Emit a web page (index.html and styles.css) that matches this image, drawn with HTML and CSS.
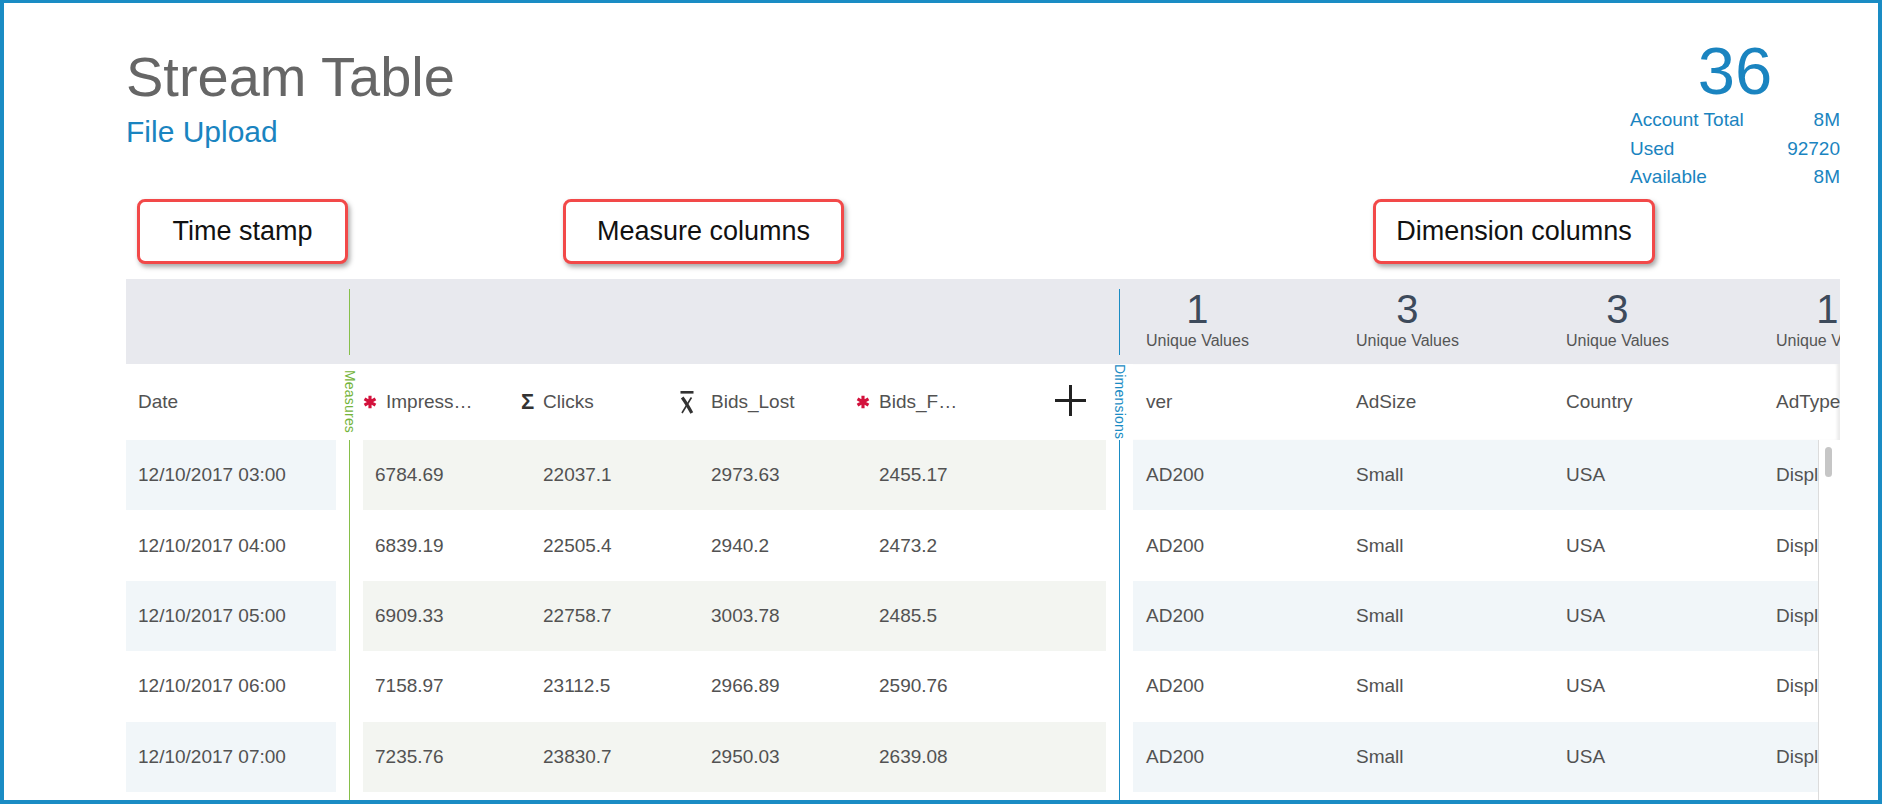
FILE: index.html
```html
<!DOCTYPE html>
<html lang="en">
<head>
<meta charset="utf-8">
<title>Stream Table</title>
<link rel="stylesheet" href="styles.css">
</head>
<body>
<div class="frame">
  <div class="top">
    <div class="titles">
      <h1 class="title">Stream Table</h1>
      <div class="subtitle">File Upload</div>
    </div>
    <div class="stats">
      <div class="big">36</div>
      <div class="stat"><span>Account Total</span><span>8M</span></div>
      <div class="stat"><span>Used</span><span>92720</span></div>
      <div class="stat"><span>Available</span><span>8M</span></div>
    </div>
  </div>

  <div class="callouts">
    <div class="callout c-time">Time stamp</div>
    <div class="callout c-meas">Measure columns</div>
    <div class="callout c-dim">Dimension columns</div>
  </div>

  <div class="table">
    <div class="date-col">
      <div class="band"></div>
      <div class="head"><span class="pad">Date</span></div>
      <div class="cell odd-d">12/10/2017 03:00</div>
      <div class="cell">12/10/2017 04:00</div>
      <div class="cell odd-d">12/10/2017 05:00</div>
      <div class="cell">12/10/2017 06:00</div>
      <div class="cell odd-d">12/10/2017 07:00</div>
    </div>

    <div class="sep sep-m">
      <div class="sep-band"><div class="line"></div></div>
      <div class="sep-head"><span class="vlabel">Measures</span></div>
      <div class="sep-body"><div class="line"></div></div>
    </div>

    <div class="measure-col">
      <div class="band"></div>
      <div class="head m-head">
        <div class="m-cell h-first"><span class="ico ico-first"><svg class="ast" viewBox="0 0 12 12" width="14" height="14"><path d="M6 0.6V11.4M1.3 3.3L10.7 8.7M1.3 8.7L10.7 3.3"/></svg></span>Impress…</div>
        <div class="m-cell"><span class="ico ico-sum">Σ</span>Clicks</div>
        <div class="m-cell"><span class="ico ico-avg"><svg viewBox="0 0 14 23" width="14" height="23"><rect x="0.5" y="0" width="13" height="2.6" fill="#333"/><path d="M2.2 6.5C5.2 10.5 8.5 16 11.8 22" stroke="#333" stroke-width="3.2" fill="none"/><path d="M11.5 6.5C8.6 11 5.4 16.5 2 22" stroke="#333" stroke-width="1.6" fill="none"/></svg></span>Bids_Lost</div>
        <div class="m-cell"><span class="ico ico-ast"><svg class="ast" viewBox="0 0 12 12" width="14" height="14"><path d="M6 0.6V11.4M1.3 3.3L10.7 8.7M1.3 8.7L10.7 3.3"/></svg></span>Bids_F…</div>
        <div class="m-plus"><svg viewBox="0 0 31 31" width="31" height="31"><path d="M15.5 0V31M0 15.5H31" stroke="#222" stroke-width="3"/></svg></div>
      </div>
      <div class="m-row odd-m"><div class="m-cell">6784.69</div><div class="m-cell">22037.1</div><div class="m-cell">2973.63</div><div class="m-cell">2455.17</div></div>
      <div class="m-row"><div class="m-cell">6839.19</div><div class="m-cell">22505.4</div><div class="m-cell">2940.2</div><div class="m-cell">2473.2</div></div>
      <div class="m-row odd-m"><div class="m-cell">6909.33</div><div class="m-cell">22758.7</div><div class="m-cell">3003.78</div><div class="m-cell">2485.5</div></div>
      <div class="m-row"><div class="m-cell">7158.97</div><div class="m-cell">23112.5</div><div class="m-cell">2966.89</div><div class="m-cell">2590.76</div></div>
      <div class="m-row odd-m"><div class="m-cell">7235.76</div><div class="m-cell">23830.7</div><div class="m-cell">2950.03</div><div class="m-cell">2639.08</div></div>
    </div>

    <div class="sep sep-d">
      <div class="sep-band"><div class="line"></div></div>
      <div class="sep-head"><span class="vlabel">Dimensions</span></div>
      <div class="sep-body"><div class="line"></div></div>
    </div>

    <div class="dim-col">
      <div class="band d-band">
        <div class="d-cell"><div class="uv"><span class="uv-n">1</span><span class="uv-l">Unique Values</span></div></div>
        <div class="d-cell"><div class="uv"><span class="uv-n">3</span><span class="uv-l">Unique Values</span></div></div>
        <div class="d-cell"><div class="uv"><span class="uv-n">3</span><span class="uv-l">Unique Values</span></div></div>
        <div class="d-cell"><div class="uv"><span class="uv-n">1</span><span class="uv-l">Unique Values</span></div></div>
      </div>
      <div class="head d-head">
        <div class="d-cell">ver</div>
        <div class="d-cell">AdSize</div>
        <div class="d-cell">Country</div>
        <div class="d-cell">AdType</div>
      </div>
      <div class="d-body">
        <div class="d-rows">
          <div class="d-row odd-d"><div class="d-cell">AD200</div><div class="d-cell">Small</div><div class="d-cell">USA</div><div class="d-cell">Display</div></div>
          <div class="d-row"><div class="d-cell">AD200</div><div class="d-cell">Small</div><div class="d-cell">USA</div><div class="d-cell">Display</div></div>
          <div class="d-row odd-d"><div class="d-cell">AD200</div><div class="d-cell">Small</div><div class="d-cell">USA</div><div class="d-cell">Display</div></div>
          <div class="d-row"><div class="d-cell">AD200</div><div class="d-cell">Small</div><div class="d-cell">USA</div><div class="d-cell">Display</div></div>
          <div class="d-row odd-d"><div class="d-cell">AD200</div><div class="d-cell">Small</div><div class="d-cell">USA</div><div class="d-cell">Display</div></div>
        </div>
        <div class="scroll"><div class="thumb"></div></div>
      </div>
    </div>
  </div>
</div>
</body>
</html>
```

FILE: styles.css
```css
* { box-sizing: border-box; margin: 0; padding: 0; }
html, body { width: 1882px; height: 804px; overflow: hidden; background: #fff; }
body { font-family: "Liberation Sans", Arial, sans-serif; color: #525252; }

.frame {
  width: 1882px;
  height: 804px;
  border: solid #1a8cc4;
  border-width: 3px 4px 4px 4px;
  padding: 33px 38px 0 122px;
  display: flex;
  flex-direction: column;
  overflow: hidden;
}

/* header */
.top { display: flex; justify-content: space-between; align-items: flex-start; }
.titles { margin-top: 11px; }
.title { font-size: 56px; line-height: 60px; font-weight: normal; color: #666; }
.subtitle { font-size: 30px; line-height: 34px; margin-top: 8px; color: #1a84c0; }
.stats { width: 210px; color: #1a84c0; }
.big { font-size: 67px; line-height: 70px; text-align: center; }
.stat { display: flex; justify-content: space-between; font-size: 19px; line-height: 28.5px; }

/* callouts */
.callouts { display: flex; margin-top: 7.5px; height: 65px; flex-shrink: 0; }
.callout {
  height: 65px;
  border: 3px solid #f24949;
  border-radius: 8px;
  box-shadow: 2px 3px 5px rgba(0, 0, 0, 0.35);
  background: #fff;
  display: flex;
  align-items: center;
  justify-content: center;
  font-size: 27px;
  color: #111;
}
.c-time { margin-left: 11px; width: 211px; }
.c-meas { margin-left: 215px; width: 281px; }
.c-dim { margin-left: 529px; width: 282px; }

/* table */
.table { display: flex; margin-top: 15px; flex: 1; min-height: 0; font-size: 19px; }
.band { height: 85px; background: #e8e9ee; flex-shrink: 0; }
.head { height: 76px; display: flex; align-items: center; flex-shrink: 0; }

.date-col { width: 210px; display: flex; flex-direction: column; }
.head .pad { padding-left: 12px; }
.cell { height: 70.4px; display: flex; align-items: center; padding-left: 12px; flex-shrink: 0; }
.odd-d { background: #f1f6f9; }
.odd-m { background: #f3f5f1; }

.sep { width: 27px; display: flex; flex-direction: column; align-items: center; }
.sep-band { height: 85px; align-self: stretch; background: #e8e9ee; display: flex; justify-content: center; padding-top: 10px; }
.sep-band .line { height: 66px; }
.sep-head { height: 76px; display: flex; align-items: center; justify-content: center; }
.sep-body { flex: 1; display: flex; }
.line { width: 1px; }
.vlabel { writing-mode: vertical-rl; font-size: 14px; line-height: 14px; letter-spacing: 0.2px; }
.sep-m .line { background: #86bf4a; }
.sep-m .vlabel { color: #74b43a; }
.sep-d .line { background: #1a8cc4; }
.sep-d .vlabel { color: #1a8cc4; }

.measure-col { width: 743px; display: flex; flex-direction: column; }
.m-row { height: 70.4px; display: flex; align-items: center; flex-shrink: 0; }
.m-cell { width: 168px; padding-left: 12px; display: flex; align-items: center; flex-shrink: 0; }
.m-head .m-cell.h-first { padding-left: 0; }
.ico { display: inline-flex; align-items: center; flex-shrink: 0; }
.ico-first { width: 23px; }
.ico-sum { width: 24px; margin-left: -24px; padding-left: 2px; font-weight: bold; font-size: 22px; color: #333; }
.ico-avg { width: 32px; margin-left: -32px; padding-left: 1px; }
.ico-ast { width: 24px; margin-left: -24px; padding-left: 1px; }
.ast { stroke: #d3123c; stroke-width: 2.7; fill: none; }
.m-plus { width: 71px; display: flex; justify-content: center; align-items: center; margin-top: -3px; }

.dim-col { flex: 1; min-width: 0; display: flex; flex-direction: column; overflow: hidden; }
.d-band { display: flex; padding-top: 10px; }
.d-cell { width: 210px; padding-left: 13px; flex-shrink: 0; white-space: nowrap; }
.uv { display: inline-flex; flex-direction: column; align-items: center; }
.uv-n { font-size: 40px; line-height: 40px; color: #3d4a5b; }
.uv-l { font-size: 16px; line-height: 18px; margin-top: 3px; color: #555; }
.d-head { box-shadow: inset -4px 0 3px -1px #ececec; }
.d-body { flex: 1; display: flex; min-height: 0; }
.d-rows { width: 685px; overflow: hidden; flex-shrink: 0; }
.d-row { width: 840px; height: 70.4px; display: flex; align-items: center; }
.scroll { flex: 1; border-left: 1px solid #dcdcdc; }
.thumb { width: 7px; height: 30px; margin: 7px 0 0 6px; border-radius: 4px; background: #c6c6c6; }
```
